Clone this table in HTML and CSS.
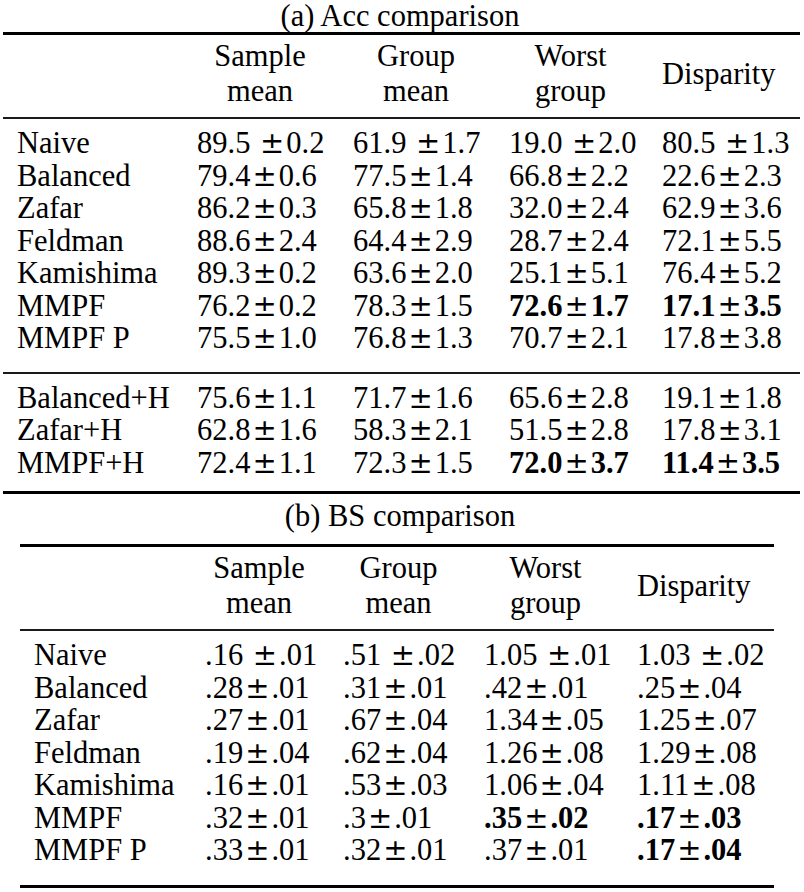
FILE: index.html
```html
<!DOCTYPE html>
<html lang="en">
<head>
<meta charset="utf-8">
<title>Acc and BS comparison</title>
<link rel="stylesheet" href="styles.css">
</head>
<body>
<div class="page">
  <section class="block block-a">
    <div class="caption">(a) Acc comparison</div>
    <table class="results results-a">
      <colgroup>
        <col class="c1"><col class="c2"><col class="c3"><col class="c4"><col class="c5">
      </colgroup>
      <thead>
        <tr>
          <th class="name"></th>
          <th class="hd">Sample<br>mean</th>
          <th class="hd">Group<br>mean</th>
          <th class="hd">Worst<br>group</th>
          <th class="hd hd-last">Disparity</th>
        </tr>
      </thead>
      <tbody class="grp grp-1">
        <tr><td class="name">Naive</td><td>89.5 <span class="pm">±</span>0.2</td><td>61.9 <span class="pm">±</span>1.7</td><td>19.0 <span class="pm">±</span>2.0</td><td>80.5 <span class="pm">±</span>1.3</td></tr>
        <tr><td class="name">Balanced</td><td>79.4<span class="pm">±</span>0.6</td><td>77.5<span class="pm">±</span>1.4</td><td>66.8<span class="pm">±</span>2.2</td><td>22.6<span class="pm">±</span>2.3</td></tr>
        <tr><td class="name">Zafar</td><td>86.2<span class="pm">±</span>0.3</td><td>65.8<span class="pm">±</span>1.8</td><td>32.0<span class="pm">±</span>2.4</td><td>62.9<span class="pm">±</span>3.6</td></tr>
        <tr><td class="name">Feldman</td><td>88.6<span class="pm">±</span>2.4</td><td>64.4<span class="pm">±</span>2.9</td><td>28.7<span class="pm">±</span>2.4</td><td>72.1<span class="pm">±</span>5.5</td></tr>
        <tr><td class="name">Kamishima</td><td>89.3<span class="pm">±</span>0.2</td><td>63.6<span class="pm">±</span>2.0</td><td>25.1<span class="pm">±</span>5.1</td><td>76.4<span class="pm">±</span>5.2</td></tr>
        <tr><td class="name">MMPF</td><td>76.2<span class="pm">±</span>0.2</td><td>78.3<span class="pm">±</span>1.5</td><td><b>72.6</b><span class="pm">±</span><b>1.7</b></td><td><b>17.1</b><span class="pm">±</span><b>3.5</b></td></tr>
        <tr><td class="name">MMPF P</td><td>75.5<span class="pm">±</span>1.0</td><td>76.8<span class="pm">±</span>1.3</td><td>70.7<span class="pm">±</span>2.1</td><td>17.8<span class="pm">±</span>3.8</td></tr>
      </tbody>
      <tbody class="grp grp-2">
        <tr><td class="name">Balanced+H</td><td>75.6<span class="pm">±</span>1.1</td><td>71.7<span class="pm">±</span>1.6</td><td>65.6<span class="pm">±</span>2.8</td><td>19.1<span class="pm">±</span>1.8</td></tr>
        <tr><td class="name">Zafar+H</td><td>62.8<span class="pm">±</span>1.6</td><td>58.3<span class="pm">±</span>2.1</td><td>51.5<span class="pm">±</span>2.8</td><td>17.8<span class="pm">±</span>3.1</td></tr>
        <tr><td class="name">MMPF+H</td><td>72.4<span class="pm">±</span>1.1</td><td>72.3<span class="pm">±</span>1.5</td><td><b>72.0</b><span class="pm">±</span><b>3.7</b></td><td><b>11.4</b><span class="pm">±</span><b>3.5</b></td></tr>
      </tbody>
    </table>
  </section>

  <section class="block block-b">
    <div class="caption caption-b">(b) BS comparison</div>
    <table class="results results-b">
      <colgroup>
        <col class="c1"><col class="c2"><col class="c3"><col class="c4"><col class="c5">
      </colgroup>
      <thead>
        <tr>
          <th class="name"></th>
          <th class="hd">Sample<br>mean</th>
          <th class="hd">Group<br>mean</th>
          <th class="hd">Worst<br>group</th>
          <th class="hd hd-last">Disparity</th>
        </tr>
      </thead>
      <tbody class="grp grp-only">
        <tr><td class="name">Naive</td><td>.16 <span class="pm">±</span>.01</td><td>.51 <span class="pm">±</span>.02</td><td>1.05 <span class="pm">±</span>.01</td><td>1.03 <span class="pm">±</span>.02</td></tr>
        <tr><td class="name">Balanced</td><td>.28<span class="pm">±</span>.01</td><td>.31<span class="pm">±</span>.01</td><td>.42<span class="pm">±</span>.01</td><td>.25<span class="pm">±</span>.04</td></tr>
        <tr><td class="name">Zafar</td><td>.27<span class="pm">±</span>.01</td><td>.67<span class="pm">±</span>.04</td><td>1.34<span class="pm">±</span>.05</td><td>1.25<span class="pm">±</span>.07</td></tr>
        <tr><td class="name">Feldman</td><td>.19<span class="pm">±</span>.04</td><td>.62<span class="pm">±</span>.04</td><td>1.26<span class="pm">±</span>.08</td><td>1.29<span class="pm">±</span>.08</td></tr>
        <tr><td class="name">Kamishima</td><td>.16<span class="pm">±</span>.01</td><td>.53<span class="pm">±</span>.03</td><td>1.06<span class="pm">±</span>.04</td><td>1.11<span class="pm">±</span>.08</td></tr>
        <tr><td class="name">MMPF</td><td>.32<span class="pm">±</span>.01</td><td>.3<span class="pm">±</span>.01</td><td><b>.35</b><span class="pm">±</span><b>.02</b></td><td><b>.17</b><span class="pm">±</span><b>.03</b></td></tr>
        <tr><td class="name">MMPF P</td><td>.33<span class="pm">±</span>.01</td><td>.32<span class="pm">±</span>.01</td><td>.37<span class="pm">±</span>.01</td><td><b>.17</b><span class="pm">±</span><b>.04</b></td></tr>
      </tbody>
    </table>
  </section>
</div>
</body>
</html>
```

FILE: styles.css
```css
html, body {
  margin: 0;
  padding: 0;
  background: #ffffff;
}

body {
  font-family: "Liberation Serif", "Times New Roman", serif;
  font-size: 30.5px;
  color: #000000;
}

.page {
  width: 800px;
}

.caption {
  text-align: center;
  line-height: 32px;
  height: 32px;
  white-space: nowrap;
}

.caption-b {
  margin-top: 6px;
  margin-bottom: 12px;
}

.results {
  border-collapse: separate;
  border-spacing: 0;
  table-layout: fixed;
}

.results th,
.results td {
  padding: 0 15px;
  white-space: nowrap;
  text-align: left;
  font-weight: normal;
  line-height: 32.5px;
  vertical-align: middle;
}

.results .name {
  padding-left: 14px;
}

.results b {
  font-weight: bold;
}

/* plus-minus sign: wider, math-style glyph */
.pm {
  font-family: "DejaVu Serif", "Liberation Serif", serif;
  font-size: 0.95em;
  font-weight: normal;
  margin: 0 2px;
}

/* header */
.results thead th {
  border-top: 3px solid #000000;
  border-bottom: 2px solid #1a1a1a;
  padding-top: 4px;
  padding-bottom: 8px;
  line-height: 35px;
}

.results thead th.hd {
  text-align: center;
}

.results thead th.hd-last {
  padding-right: 27px;
}

/* body groups */
.results tbody tr:first-child td {
  padding-top: 8px;
}

.grp-1 tr:last-child td {
  padding-bottom: 17px;
}

.grp-2 tr:first-child td {
  border-top: 2px solid #1a1a1a;
}

.grp-2 tr:last-child td,
.grp-only tr:last-child td {
  border-bottom: 3px solid #000000;
}

.grp-2 tr:last-child td {
  padding-bottom: 12px;
}

.grp-only tr:last-child td {
  padding-bottom: 18px;
}

/* column geometry, table (a) */
.results-a {
  margin-left: 3px;
  width: 797px;
}
.results-a .c1 { width: 179px; }
.results-a .c2 { width: 156px; }
.results-a .c3 { width: 156px; }
.results-a .c4 { width: 153px; }
.results-a .c5 { width: 153px; }

/* column geometry, table (b) */
.results-b {
  margin-left: 20px;
  width: 754px;
}
.results-b .c1 { width: 170px; }
.results-b .c2 { width: 138px; }
.results-b .c3 { width: 141px; }
.results-b .c4 { width: 153px; }
.results-b .c5 { width: 152px; }
```
